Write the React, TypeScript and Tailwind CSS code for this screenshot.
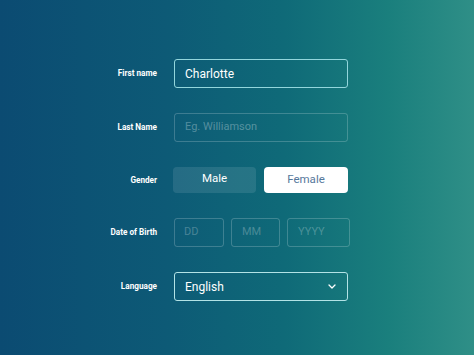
import React from 'react';

const labelCls = 'w-[157px] shrink-0 text-right text-[8.2px] font-bold text-white';

const Row: React.FC<{ label: string; children: React.ReactNode }> = ({ label, children }) => (
    <div className="flex items-center gap-[17px]">
        <span className={labelCls}>{label}</span>
        {children}
    </div>
);

export default function App() {
    return (
        <div
            className="w-[474px] h-[355px] overflow-hidden bg-[linear-gradient(90deg,#0b4b72_0%,#0d5a76_35%,#0f6a78_60%,#1a7f7d_82%,#2f8f87_100%)] pt-[59px]"
            style={{ fontFamily: 'Roboto, "Liberation Sans", sans-serif' }}
        >
            <div className="flex flex-col gap-[25px]">
                <Row label="First name">
                    <div className="w-[174px] h-[29px] rounded-[3px] border-[1.5px] border-[#93d6dc] flex items-center px-[10px] text-[12px] text-white">
                        Charlotte
                    </div>
                </Row>
                <Row label="Last Name">
                    <div className="w-[174px] h-[29px] rounded-[3px] border border-white/20 flex items-center px-[10px] text-[11px] text-white/30">
                        Eg. Williamson
                    </div>
                </Row>
                <Row label="Gender">
                    <div className="flex gap-[8px] -ml-px">
                        <div className="w-[83px] h-[26px] rounded-[4px] bg-white/10 flex items-center justify-center pb-[2px] text-[11.5px] text-white">
                            Male
                        </div>
                        <div className="w-[84px] h-[26px] rounded-[4px] bg-white flex items-center justify-center pb-[1px] text-[11.5px] text-[#56789c]">
                            Female
                        </div>
                    </div>
                </Row>
                <Row label="Date of Birth">
                    <div className="flex gap-[7px]">
                        <div className="w-[50px] h-[29px] rounded-[3px] border border-white/20 flex items-center px-[9px] text-[11px] text-white/25">DD</div>
                        <div className="w-[49px] h-[29px] rounded-[3px] border border-white/20 flex items-center px-[10px] text-[11px] text-white/25">MM</div>
                        <div className="w-[63px] h-[29px] rounded-[3px] border border-white/20 flex items-center px-[10px] text-[11px] text-white/25">YYYY</div>
                    </div>
                </Row>
                <Row label="Language">
                    <div className="w-[174px] h-[29px] rounded-[3px] border-[1.5px] border-[#b3e3e6] flex items-center justify-between pl-[10px] pr-[11px] text-[12px] text-white">
                        <span>English</span>
                        <svg width="8" height="5" viewBox="0 0 8 5" fill="none">
                            <path d="M1 1l3 3 3-3" stroke="white" strokeWidth="1.3" strokeLinecap="round" strokeLinejoin="round" />
                        </svg>
                    </div>
                </Row>
            </div>
        </div>
    );
}
